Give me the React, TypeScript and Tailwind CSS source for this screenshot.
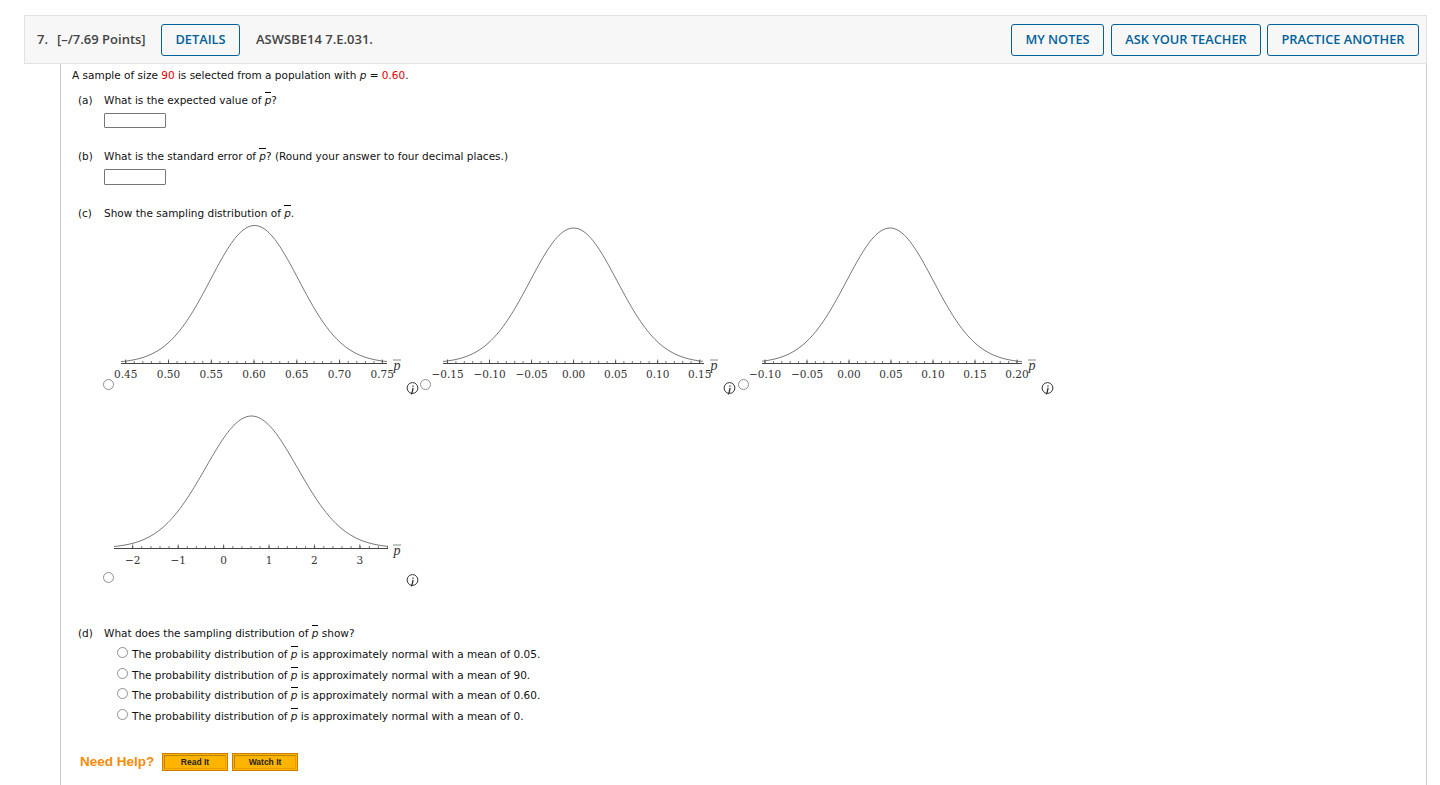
import React from 'react';

const bodyFont = "font-['DejaVu_Sans',Verdana,sans-serif]";

// p with a bar over it
const PBar = () => (
  <span className="relative inline-block italic">
    p
    <span className="absolute left-0 right-0 top-[-1px] h-px bg-black"></span>
  </span>
);

const Radio = () => (
  <span className="block w-[11px] h-[11px] rounded-full border border-[#8f8f8f] bg-white"></span>
);

const InfoIcon = () => (
  <svg width="13" height="13" viewBox="0 0 13 13" className="block">
    <circle cx="6.5" cy="6" r="5.4" fill="none" stroke="#333" strokeWidth="1" />
    <path d="M7 3.6 L7 4.8 M7.1 5.8 L5.9 11.6 M4.9 11.2 L6 12.2" fill="none" stroke="#333" strokeWidth="1.3" />
  </svg>
);

type ChartProps = {
  width: number;
  height: number;
  left: number; // page x of the svg's left edge
  peakX: number;
  peakY: number;
  axisY: number;
  axisFrom: number;
  axisTo: number;
  sigma: number;
  ticks: { x: number; label: string }[];
  barX: number;
  top: number;
  labelY: number;
};

const Chart = ({ width, height, left, peakX, peakY, axisY, axisFrom, axisTo, sigma, ticks, barX, top, labelY }: ChartProps) => {
  const pts: string[] = [];
  for (let x = axisFrom; x <= axisTo; x += 2) {
    const y = axisY - (axisY - peakY) * Math.exp(-((x - peakX) * (x - peakX)) / (2 * sigma * sigma));
    pts.push(`${x - left},${(y - top).toFixed(2)}`);
  }
  const step = (ticks[1].x - ticks[0].x) / 5;
  const minor: number[] = [];
  for (let x = ticks[0].x; x <= axisTo; x += step) minor.push(x);
  return (
    <svg width={width} height={height} className="block flex-none">
      <polyline points={pts.join(' ')} fill="none" stroke="#555" strokeWidth="0.8" />
      <line x1={axisFrom - left} x2={axisTo - left} y1={axisY - top + 0.5} y2={axisY - top + 0.5} stroke="#444" strokeWidth="1" />
      {minor.map((x, i) => (
        <line key={i} x1={x - left} x2={x - left} y1={axisY - top - 2} y2={axisY - top} stroke="#555" strokeWidth="0.8" />
      ))}
      {ticks.map((t) => (
        <g key={t.label}>
          <line x1={t.x - left} x2={t.x - left} y1={axisY - top - 3.5} y2={axisY - top} stroke="#444" strokeWidth="0.8" />
          <text x={t.x - left} y={labelY - top} textAnchor="middle" fontSize="10.5" fill="#333" fontFamily="'DejaVu Serif', serif">
            {t.label}
          </text>
        </g>
      ))}
      <line x1={barX - left} x2={barX + 8 - left} y1={axisY - top - 3} y2={axisY - top - 3} stroke="#888" strokeWidth="1" />
      <text x={barX + 0.5 - left} y={axisY - top + 6.5} fontSize="14" fontStyle="italic" fill="#333" fontFamily="'Liberation Serif', serif">
        p
      </text>
    </svg>
  );
};

const HeaderButton = ({ children, className }: { children: React.ReactNode; className: string }) => (
  <button className={`h-[32px] rounded-[3px] border border-[#00629b] text-[#00629b] text-[12.8px] font-semibold ${className}`}>
    {children}
  </button>
);

const HelpButton = ({ label }: { label: string }) => (
  <div className="w-[66px] h-[18px] border border-[#d07c00] bg-[#ffb400] p-px">
    <div className="h-full border border-[#b5830f] border-r-[#e8a000] border-b-[#e8a000] flex items-center justify-center">
      <span className="text-[8.5px] font-bold text-[#222] font-['Liberation_Sans',Arial,sans-serif]">{label}</span>
    </div>
  </div>
);

const chartOne = [
  { x: 125.7, label: '0.45' },
  { x: 168.5, label: '0.50' },
  { x: 211.3, label: '0.55' },
  { x: 254, label: '0.60' },
  { x: 296.8, label: '0.65' },
  { x: 339.5, label: '0.70' },
  { x: 382.3, label: '0.75' },
];
const chartTwo = [
  { x: 447.5, label: '−0.15' },
  { x: 489.5, label: '−0.10' },
  { x: 531.6, label: '−0.05' },
  { x: 573.6, label: '0.00' },
  { x: 615.7, label: '0.05' },
  { x: 657.7, label: '0.10' },
  { x: 699.8, label: '0.15' },
];
const chartThree = [
  { x: 765, label: '−0.10' },
  { x: 807, label: '−0.05' },
  { x: 849, label: '0.00' },
  { x: 891, label: '0.05' },
  { x: 933, label: '0.10' },
  { x: 975, label: '0.15' },
  { x: 1017, label: '0.20' },
];
const chartFour = [
  { x: 132.7, label: '−2' },
  { x: 178.2, label: '−1' },
  { x: 223.6, label: '0' },
  { x: 269, label: '1' },
  { x: 314.4, label: '2' },
  { x: 359.8, label: '3' },
];

const means = ['0.05', '90', '0.60', '0'];

export default function App() {
  return (
    <div className="h-screen overflow-hidden bg-white pt-[15px] pl-[24px] pr-[13px] flex flex-col">
      {/* Question header */}
      <div className="h-[49px] flex-none flex items-center bg-[#f7f7f7] border border-[#e2e2e2] pl-[12px] pr-[7px] text-[13px] text-[#444] font-semibold font-['Open_Sans',sans-serif]">
        <span className="w-[20px]">7.</span>
        <span className="w-[104px]">[–/7.69 Points]</span>
        <HeaderButton className="w-[79px]">DETAILS</HeaderButton>
        <span className="ml-[16px]">ASWSBE14 7.E.031.</span>
        <div className="ml-auto flex">
          <HeaderButton className="w-[93px] mr-[7px]">MY NOTES</HeaderButton>
          <HeaderButton className="w-[150px] mr-[6px]">ASK YOUR TEACHER</HeaderButton>
          <HeaderButton className="w-[152px]">PRACTICE ANOTHER</HeaderButton>
        </div>
      </div>

      {/* Question body */}
      <div className={`flex-1 ml-[36px] border-l border-r border-l-[#c8c8c8] border-r-[#cfcfcf] pl-[11px] text-[10.5px] text-[#111] ${bodyFont}`}>
        <p className="h-[14px] leading-[14px] mt-[4px]">
          A sample of size <span className="text-[#e00000]">90</span> is selected from a population with <i>p</i> = <span className="text-[#e00000]">0.60</span>.
        </p>

        <div className="flex mt-[11px] pl-[6px] h-[14px] leading-[14px]">
          <span className="w-[26px]">(a)</span>
          <span>What is the expected value of <PBar />?</span>
        </div>
        <div className="mt-[6px] ml-[32px] w-[62px] h-[15px] border border-[#777] rounded-[1px] bg-white"></div>

        <div className="flex mt-[21px] pl-[6px] h-[14px] leading-[14px]">
          <span className="w-[26px]">(b)</span>
          <span>What is the standard error of <PBar />? (Round your answer to four decimal places.)</span>
        </div>
        <div className="mt-[6px] ml-[32px] w-[62px] h-[16px] border border-[#777] rounded-[1px] bg-white"></div>

        <div className="flex mt-[21px] pl-[6px] h-[14px] leading-[14px]">
          <span className="w-[26px]">(c)</span>
          <span>Show the sampling distribution of <PBar />.</span>
        </div>

        {/* Graph options */}
        <div className="flex ml-[31px] mt-[2px] h-[174px]">
          <div className="flex-none self-start mt-[157px]"><Radio /></div>
          <Chart left={114} top={222} width={292} height={174} peakX={254.5} peakY={225.5} axisY={363} axisFrom={121} axisTo={387} sigma={44} ticks={chartOne} barX={393} labelY={378.2} />
          <div className="flex-none self-start mt-[160px]"><InfoIcon /></div>
          <div className="flex-none self-start mt-[157px] ml-[1px]"><Radio /></div>
          <Chart left={431} top={222} width={292} height={174} peakX={573.6} peakY={228} axisY={363} axisFrom={443} axisTo={704} sigma={43.6} ticks={chartTwo} barX={710} labelY={378.2} />
          <div className="flex-none self-start mt-[160px]"><InfoIcon /></div>
          <div className="flex-none self-start mt-[157px] ml-[2px]"><Radio /></div>
          <Chart left={749} top={222} width={292} height={174} peakX={890} peakY={228} axisY={363} axisFrom={762} axisTo={1022} sigma={43.5} ticks={chartThree} barX={1028} labelY={378.2} />
          <div className="flex-none self-start mt-[160px]"><InfoIcon /></div>
        </div>
        <div className="flex ml-[31px] mt-[16px] h-[178px]">
          <div className="flex-none self-start mt-[160px]"><Radio /></div>
          <Chart left={114} top={412} width={292} height={178} peakX={251.5} peakY={416} axisY={548} axisFrom={114} axisTo={388} sigma={46} ticks={chartFour} barX={393} labelY={564.2} />
          <div className="flex-none self-start mt-[162px]"><InfoIcon /></div>
        </div>

        <div className="flex mt-[36px] pl-[6px] h-[14px] leading-[14px]">
          <span className="w-[26px]">(d)</span>
          <span>What does the sampling distribution of <PBar /> show?</span>
        </div>

        <div className="mt-[7px] ml-[45px] flex flex-col gap-[6.7px]">
          {means.map((m) => (
            <div key={m} className="flex items-center h-[14px] leading-[14px]">
              <span className="mr-[4px] -mt-[3px]"><Radio /></span>
              <span>The probability distribution of <PBar /> is approximately normal with a mean of {m}.</span>
            </div>
          ))}
        </div>

        <div className="flex items-center mt-[29px] pl-[8px]">
          <span className="w-[82px] text-[13.5px] font-bold text-[#f58a07] font-['Liberation_Sans',Arial,sans-serif]">Need Help?</span>
          <div className="flex gap-[4px]">
            <HelpButton label="Read It" />
            <HelpButton label="Watch It" />
          </div>
        </div>
      </div>
    </div>
  );
}
